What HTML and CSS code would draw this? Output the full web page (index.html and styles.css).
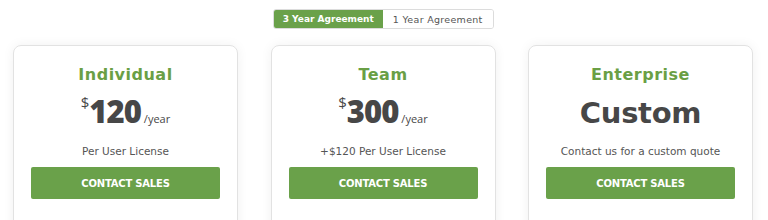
FILE: index.html
```html
<!DOCTYPE html>
<html>
<head>
<meta charset="utf-8">
<link rel="stylesheet" href="styles.css">
</head>
<body>
<div class="page">
  <div class="toggle">
    <span class="opt active">3 Year Agreement</span>
    <span class="opt">1 Year Agreement</span>
  </div>
  <div class="cards">
    <div class="card">
      <div class="title">Individual</div>
      <div class="price"><span class="cur">$</span><span class="amt">120</span><span class="per">/year</span></div>
      <div class="sub">Per User License</div>
      <a class="btn">CONTACT SALES</a>
    </div>
    <div class="card">
      <div class="title">Team</div>
      <div class="price"><span class="cur">$</span><span class="amt">300</span><span class="per">/year</span></div>
      <div class="sub">+$120 Per User License</div>
      <a class="btn">CONTACT SALES</a>
    </div>
    <div class="card">
      <div class="title">Enterprise</div>
      <div class="price"><span class="amt custom">Custom</span></div>
      <div class="sub">Contact us for a custom quote</div>
      <a class="btn">CONTACT SALES</a>
    </div>
  </div>
</div>
</body>
</html>
```

FILE: styles.css
```css
html, body {
  margin: 0;
  padding: 0;
  background: #ffffff;
  overflow: hidden;
}
body {
  font-family: "DejaVu Sans", "Open Sans", sans-serif;
  color: #474747;
}
.page {
  width: 766px;
  padding-top: 9px;
}
.toggle {
  display: flex;
  width: 221px;
  height: 20px;
  margin: 0 auto;
  border: 1px solid #dcdcdc;
  border-radius: 3px;
  box-sizing: border-box;
  overflow: hidden;
}
.opt {
  flex: 1;
  display: flex;
  align-items: center;
  justify-content: center;
  font-size: 9.5px;
  letter-spacing: 0.3px;
  color: #555;
  background: #fff;
}
.opt.active {
  background: #6aa14a;
  color: #fff;
  font-size: 9px;
  font-weight: bold;
  letter-spacing: 0;
}
.cards {
  display: grid;
  grid-template-columns: repeat(3, 225px);
  column-gap: 32.5px;
  width: 740px;
  margin: 16px auto 0;
}
.card {
  border: 1px solid #e2e2e2;
  border-radius: 8px;
  box-shadow: 0 0 12px rgba(0, 0, 0, 0.06);
  padding: 18px 17px 30px;
  display: flex;
  flex-direction: column;
  align-items: center;
  height: 200px;
  box-sizing: border-box;
}
.title {
  font-size: 16px;
  font-weight: bold;
  color: #6a9f45;
  line-height: 22px;
  letter-spacing: 0.5px;
}
.price {
  display: flex;
  align-items: baseline;
  height: 40px;
  margin-top: 5px;
  font-family: "Open Sans", "DejaVu Sans", sans-serif;
}
.cur {
  align-self: flex-start;
  font-size: 15px;
  line-height: 15px;
  margin-top: 4px;
}
.amt {
  font-size: 31px;
  font-weight: 800;
  line-height: 40px;
  letter-spacing: -1px;
}
.amt.custom {
  font-family: "DejaVu Sans", sans-serif;
  font-weight: bold;
  font-size: 29px;
  letter-spacing: -0.3px;
  padding-top: 2px;
}
.per {
  font-size: 11px;
  margin-left: 3px;
}
.sub {
  font-size: 10.5px;
  color: #555;
  margin-top: 13px;
  line-height: 14px;
}
.btn {
  display: flex;
  align-items: center;
  justify-content: center;
  align-self: stretch;
  height: 32px;
  margin-top: 9px;
  background: #6aa14a;
  border-radius: 2px;
  color: #fff;
  font-size: 10px;
  font-weight: bold;
  letter-spacing: -0.2px;
}
```
